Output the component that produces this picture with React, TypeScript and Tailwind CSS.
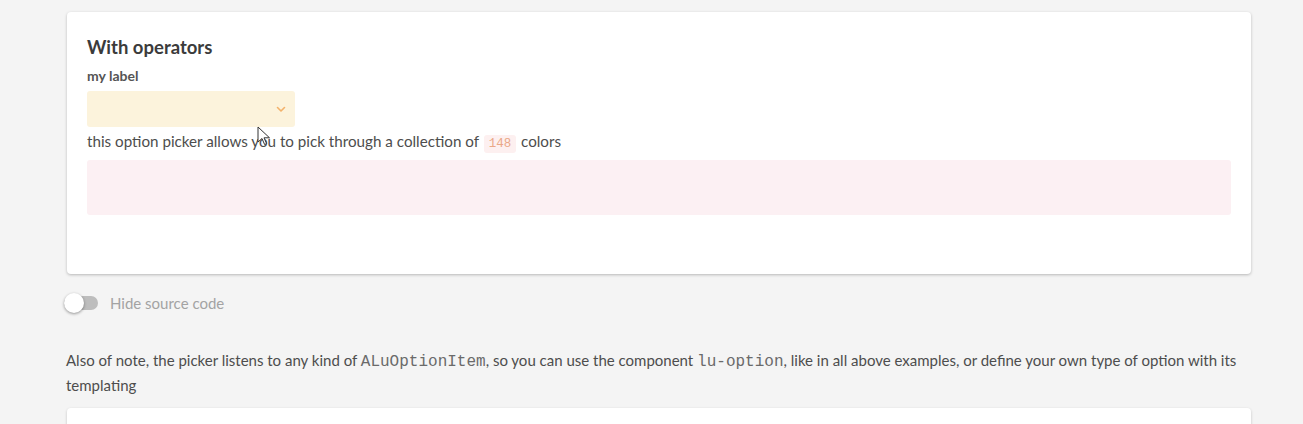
export default function App() {
  return (
    <div className="relative h-[424px] overflow-hidden bg-[#f4f4f4] font-['Lato',sans-serif] text-[#4d4d4d]">
      <div className="ml-[67px] mr-[52px] pt-3">
        <div className="rounded bg-white px-5 pt-[23px] pb-[59px] shadow-[0_1px_3px_rgba(0,0,0,0.25)]">
          <h3 className="text-[18.5px] font-bold leading-[24px] text-[#3b3b3b]">With operators</h3>
          <div className="mt-[9px] text-[14px] font-bold leading-[16px] text-[#555]">my label</div>
          <div className="mt-[7px] flex h-9 w-[208px] items-center justify-end rounded-[3px] bg-[#fcf3dc] pr-[9px]">
            <svg width="10" height="7" viewBox="0 0 10 7" fill="none">
              <path d="M1.5 1.5 5 5l3.5-3.5" stroke="#f3b26b" strokeWidth="1.6" strokeLinecap="round" strokeLinejoin="round" />
            </svg>
          </div>
          <p className="mt-[2px] text-[15.2px] leading-[24px]">
            this option picker allows you to pick through a collection of{" "}
            <code className="mx-[1px] rounded-[3px] bg-[#fdf0f0] px-[5px] py-[2px] font-['Liberation_Mono',monospace] text-[12.5px] leading-none text-[#eaa888]">148</code>{" "}
            colors
          </p>
          <div className="mt-[7px] h-[55px] rounded-[3px] bg-[#fcf0f3]" />
        </div>
      </div>

      <div className="ml-[64px] mt-[19px] flex h-5 items-center gap-[12px]">
        <div className="relative h-[14px] w-[34px] rounded-full bg-[#bdbdbd]">
          <div className="absolute -top-[3px] left-0 h-5 w-5 rounded-full bg-white shadow-[0_1px_3px_rgba(0,0,0,0.4)]" />
        </div>
        <span className="text-[15px] text-[#a3a3a3]">Hide source code</span>
      </div>

      <p className="ml-[66px] mr-[52px] mt-[35px] text-[15px] leading-[25px] text-[#4d4d4d]">
        Also of note, the picker listens to any kind of{" "}
        <code className="font-['Liberation_Mono',monospace] text-[16px] leading-none text-[#6a6a6a]">ALuOptionItem</code>, so you can use the component{" "}
        <code className="font-['Liberation_Mono',monospace] text-[16px] leading-none text-[#6a6a6a]">lu-option</code>, like in all above examples, or define your own type of option with its templating
      </p>

      <div className="ml-[67px] mr-[52px] mt-[10px] h-10 rounded bg-white shadow-[0_1px_3px_rgba(0,0,0,0.2)]" />

      <svg className="absolute left-[257px] top-[126px]" width="13" height="20" viewBox="0 0 13 20">
        <path d="M1 1v15l4-3.5 2.6 6 2-0.9-2.6-5.8H12.5L1 1z" fill="#fff" stroke="#333" strokeWidth="1" strokeLinejoin="round" />
      </svg>
    </div>
  );
}
